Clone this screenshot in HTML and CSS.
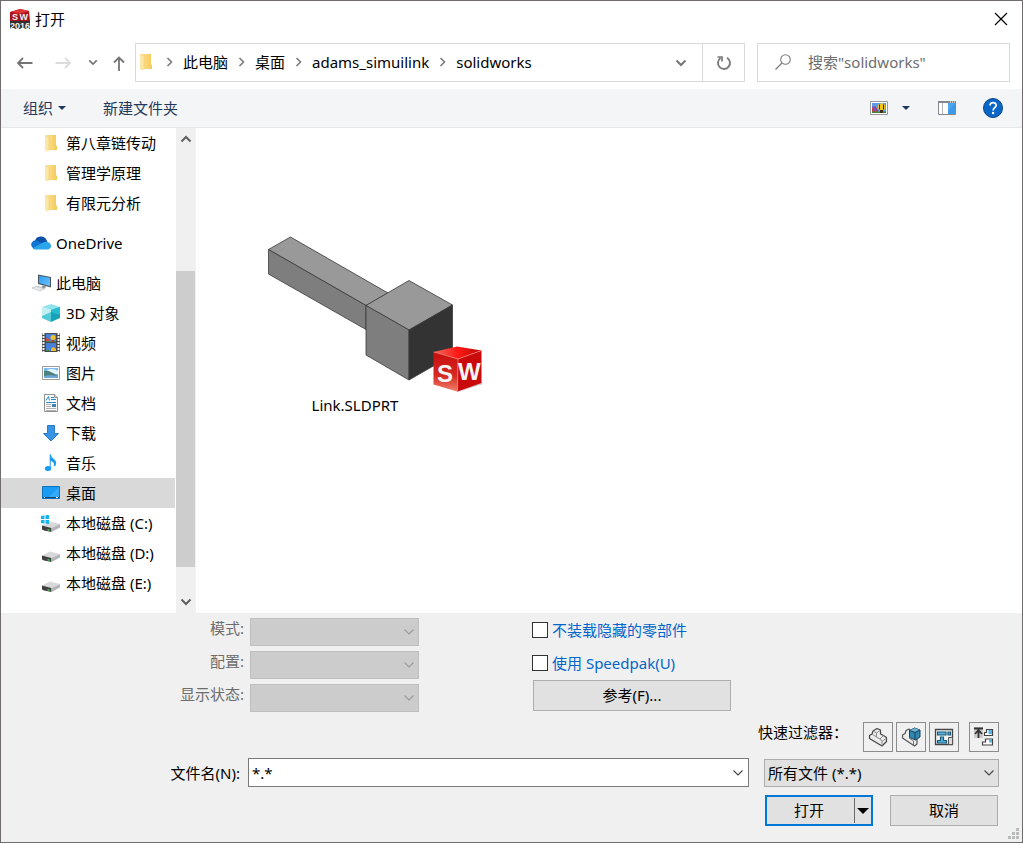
FILE: index.html
```html
<!DOCTYPE html>
<html lang="zh-CN">
<head>
  <meta charset="UTF-8">
  <meta name="viewport" content="width=device-width, initial-scale=1.0">
  <title>打开</title>
  <link rel="stylesheet" href="styles.css">
</head>
<body>
<!-- shared icons -->
<svg class="sprite" width="0" height="0">
  <defs>
    <linearGradient id="gFolder"><stop offset="0" stop-color="#ffe08a"/><stop offset="1" stop-color="#f2c95c"/></linearGradient>
    <linearGradient id="gScreen" x1="0" y1="0" x2="1" y2="1"><stop offset="0" stop-color="#2a9df4"/><stop offset="1" stop-color="#6cc4ff"/></linearGradient>
    <linearGradient id="gRed" x1="0" y1="0" x2="0" y2="1"><stop offset="0" stop-color="#c80d0d"/><stop offset=".6" stop-color="#d42a22"/><stop offset="1" stop-color="#f0806a"/></linearGradient>
    <linearGradient id="gRedTop" x1="0" y1="0" x2="1" y2="0"><stop offset="0" stop-color="#f06a62"/><stop offset=".5" stop-color="#ff1a14"/><stop offset="1" stop-color="#b80808"/></linearGradient>
  </defs>
  <symbol id="folder" viewBox="0 0 20 20">
    <path d="M6 2h9v10l1 1v4H6z" fill="url(#gFolder)"/>
    <path d="M4 2l4 2v13.500l-2 1L4 17z" fill="#fbe7a8"/>
    <path d="M4 2l4 2v13.500" fill="none" stroke="#edc768" stroke-width=".5"/>
  </symbol>
  <symbol id="right" viewBox="0 0 7 10"><path d="M1.500 1l4 4-4 4" fill="none" stroke="#7a7a7a" stroke-width="1.600"/></symbol>
  <symbol id="down" viewBox="0 0 12 8"><path d="M1.500 1.500L6 6l4.500-4.500" fill="none" stroke="currentColor" stroke-width="2"/></symbol>
  <symbol id="down-thin" viewBox="0 0 12 8"><path d="M1.500 1.500L6 6l4.500-4.500" fill="none" stroke="currentColor" stroke-width="1.100"/></symbol>
  <symbol id="caret" viewBox="0 0 8 4"><path d="M0 0h8L4 4z" fill="currentColor"/></symbol>
  <symbol id="drive" viewBox="0 0 20 20">
    <path d="M1 12.500l8-4 10 2.500-8.500 4z" fill="#d9d9dc"/>
    <path d="M1 12.500l9.500 2.500v4L3 17.500l-2-1z" fill="#3f4042"/>
    <path d="M10.500 15l8.500-4v3.500L10.500 19z" fill="#b4b5b9"/>
    <path d="M6.500 16l2 .6v1.400l-2-.6z" fill="#3fd14a"/>
  </symbol>
</svg>

<div class="dialog">
  <header class="titlebar">
    <svg class="app-icon" viewBox="0 0 20 20">
      <path d="M0 3l10-3 9 2 1 10H0z" fill="#a81218"/>
      <path d="M1 3l9-3 9 2-9 3z" fill="#de3335"/>
      <path d="M10 5v8" stroke="#6f0a0d"/>
      <text x="2" y="11" font-size="9" class="logo-text">S</text>
      <text x="9.500" y="11" font-size="9" class="logo-text">W</text>
      <path d="M0 12h20v8H0z" fill="#33302f"/>
      <text x="0" y="19.500" font-size="9" class="logo-text">2016</text>
    </svg>
    <h1>打开</h1>
    <button class="plain close" aria-label="关闭">
      <svg width="14" height="14" viewBox="0 0 14 14"><path d="M1 1l12 12M13 1L1 13" stroke="#000" stroke-width="1.200"/></svg>
    </button>
  </header>

  <nav class="navbar">
    <div class="nav-buttons">
      <button class="plain" aria-label="后退"><svg width="18" height="14" viewBox="0 0 18 14"><path d="M16.500 7H2M7 2L2 7l5 5" fill="none" stroke="#757575" stroke-width="1.800"/></svg></button>
      <button class="plain" aria-label="前进"><svg width="18" height="14" viewBox="0 0 18 14"><path d="M1.500 7H16M11 2l5 5-5 5" fill="none" stroke="#dcdcdc" stroke-width="1.800"/></svg></button>
      <button class="plain recent" aria-label="最近浏览的位置"><svg width="10" height="7"><use href="#down"/></svg></button>
      <button class="plain up" aria-label="上移"><svg width="14" height="18" viewBox="0 0 14 18"><path d="M7 17V3.500M2 8.500l5-5 5 5" fill="none" stroke="#757575" stroke-width="1.800"/></svg></button>
    </div>
    <div class="address">
      <div class="crumbs">
        <svg class="crumb-folder" width="20" height="20"><use href="#folder"/></svg>
        <svg width="7" height="10"><use href="#right"/></svg>
        <a href="#">此电脑</a>
        <svg width="7" height="10"><use href="#right"/></svg>
        <a href="#">桌面</a>
        <svg width="7" height="10"><use href="#right"/></svg>
        <a href="#">adams_simuilink</a>
        <svg width="7" height="10"><use href="#right"/></svg>
        <a href="#">solidworks</a>
      </div>
      <button class="plain addr-btn" aria-label="以前的位置"><svg width="12" height="8"><use href="#down"/></svg></button>
      <button class="plain addr-btn refresh" aria-label="刷新">
        <svg width="16" height="16" viewBox="0 0 16 16"><path d="M11 2.800a6 6 0 1 1-6.500.3" fill="none" stroke="#7a7a7a" stroke-width="1.900"/><path d="M1.500 2h4.500v4.500" fill="none" stroke="#7a7a7a" stroke-width="1.700"/></svg>
      </button>
    </div>
    <div class="search">
      <svg width="16" height="16" viewBox="0 0 16 16"><circle cx="10.500" cy="5.500" r="4.800" fill="none" stroke="#7d7d7d" stroke-width="1.100"/><path d="M7 9L.5 15.500" stroke="#7d7d7d" stroke-width="1.200"/></svg>
      <input type="text" aria-label="搜索" placeholder="搜索&quot;solidworks&quot;">
    </div>
  </nav>

  <div class="toolbar">
    <button class="plain organize">组织 <svg width="8" height="4"><use href="#caret"/></svg></button>
    <button class="plain">新建文件夹</button>
    <div class="tools">
      <button class="plain" aria-label="更改视图">
        <svg width="18" height="14" viewBox="0 0 18 14"><path d="M.5.5h17v13H.5z" fill="#fff" stroke="#9a9a9a"/><path d="M2 2h14v10H2z" fill="#5b9bf0"/><path d="M2 7l3-2 3 4v3H2z" fill="#c43c4c"/><path d="M2 5l3 1 2 3-3 1z" fill="#7357ba"/><path d="M2 10.500h14V12H2z" fill="#3d8b35"/><circle cx="11.500" cy="6" r="3.700" fill="#f2c61d"/><path d="M9.500 3.500v5M13.500 3.500v5" stroke="#322b12"/><path d="M10 9h3v3h-3z" fill="#452b16"/></svg>
      </button>
      <button class="plain" aria-label="更多选项"><svg width="8" height="4"><use href="#caret"/></svg></button>
      <button class="plain pane" aria-label="显示预览窗格">
        <svg width="18" height="14" viewBox="0 0 18 14"><path d="M.5.5h17v13H.5z" fill="#fff" stroke="#828790"/><path d="M0 0h18v2H0z" fill="#828790"/><path d="M12 1h1M14 1h1M16 1h1" stroke="#fff"/><path d="M4.500 2v11" stroke="#b3b6ba"/><path d="M10 2h7v11h-7z" fill="#3e9ae8"/><path d="M10 2h7l-7 8z" fill="#50a6ee"/></svg>
      </button>
      <button class="plain" aria-label="获取帮助">
        <svg width="20" height="20" viewBox="0 0 20 20"><circle cx="10" cy="10" r="9.500" fill="#0a67c8" stroke="#0b4384"/><path d="M7 7.500c0-4 6.200-3.800 6.200-.3 0 2.500-3.100 2.500-3.100 5.200" fill="none" stroke="#fff" stroke-width="1.700"/><circle cx="10.100" cy="15" r="1.200" fill="#fff"/></svg>
      </button>
    </div>
  </div>

  <main class="browser">
    <aside class="sidebar">
      <ul class="tree">
        <li class="sub"><svg><use href="#folder"/></svg>第八章链传动</li>
        <li class="sub"><svg><use href="#folder"/></svg>管理学原理</li>
        <li class="sub"><svg><use href="#folder"/></svg>有限元分析</li>
        <li class="root">
          <svg viewBox="0 0 20 20"><path d="M4 8a6 5.500 0 0 1 11.500-1l1.500 3-7 4-7-3z" fill="#0a4fa8"/><path d="M1 14a4.300 4.300 0 0 1 5-6.500l8 4.500-3 4H3z" fill="#1275d1"/><path d="M2 15l11-6c3-1 7 .5 7 4 0 2-1.500 3.500-4 3.500H4.500c-1 0-2-.5-2.500-1.500z" fill="#2aa5ea"/></svg>OneDrive</li>
        <li class="root">
          <svg viewBox="0 0 20 20"><path d="M7 1.500l13 2.500v10.500L7 11z" fill="#4b5560"/><path d="M8 2.800l11 2V13L8 10z" fill="url(#gScreen)"/><path d="M12 12.500l3 1-1 2-4-1z" fill="#8a9299"/><path d="M1 15l5-2 8 2.500-5 2.500z" fill="#d7dadd" stroke="#a7adb3" stroke-width=".5"/><path d="M4 14.500l7 2M3 15.300l6 1.800" stroke="#fff" stroke-width=".5"/></svg>此电脑</li>
        <li class="sub">
          <svg viewBox="0 0 20 20"><path d="M1 4l9-3 9 3-9 3z" fill="#8fe3ec"/><path d="M1 4l9 3v12l-9-4z" fill="#c1eff3"/><path d="M1 13l9-4v10l-9-4z" fill="#55cbd8"/><path d="M19 4l-9 3v12l9-4z" fill="#17a2b8"/><path d="M10 7l9-3v8l-9-3z" fill="#27bccd"/></svg>3D 对象</li>
        <li class="sub">
          <svg viewBox="0 0 20 20"><path d="M1 0h18v19H1z" fill="#4a4a4a"/><path d="M2.500 0v19M17.500 0v19" stroke="#f2f2f2" stroke-width="2" stroke-dasharray="2 1"/><path d="M5 1h10v8H5zM5 10h10v8H5z" fill="#477fdc"/><path d="M5 5l3 1 2 3H5z" fill="#d5464d"/><circle cx="12" cy="4.500" r="2.500" fill="#f3c12a"/><path d="M11 7h2v2h-2z" fill="#c72f2b"/><path d="M5 8h5v1H5zM13 8h2v1h-2z" fill="#44903d"/><path d="M10 16l2-2 3 2v2h-5z" fill="#f0bd29"/><path d="M5 17h4v1H5z" fill="#44903d"/></svg>视频</li>
        <li class="sub">
          <svg viewBox="0 0 20 20"><path d="M1.500 3.500h17v13h-17z" fill="#fff" stroke="#9b9b9b"/><path d="M3 5h14v10H3z" fill="#7ebcf2"/><path d="M6 7c4-2 8-1 11 1v3H9z" fill="#e5f3fd"/><path d="M3 8c4-1 8 1 14 5H3z" fill="#4d8079"/><path d="M3 13c5-1.500 9-.5 14 0v2H3z" fill="#6fa6d8"/></svg>图片</li>
        <li class="sub">
          <svg viewBox="0 0 20 20"><path d="M3.500 1.500h10l3 3v14h-13z" fill="#fcfcfc" stroke="#8e8e8e"/><path d="M13.500 1.500v3h3" fill="#ddd" stroke="#8e8e8e"/><path d="M5 7.500l2.500-4 1 4M10 4.500h3M10 6.500h5M5 9.500h10" fill="none" stroke="#258ad6"/><path d="M5 11.500h5M5 13.500h5M5 15.500h10M5 17.500h10" stroke="#b2b2b2"/><path d="M11 11h4v3h-4z" fill="#3f82b8"/></svg>文档</li>
        <li class="sub">
          <svg viewBox="0 0 20 20"><path d="M6.500 2.500h7v8h4L10 18l-7.500-7.500h4z" fill="#3895e6" stroke="#2a7ac6"/></svg>下载</li>
        <li class="sub">
          <svg viewBox="0 0 20 20"><ellipse cx="7" cy="15.500" rx="3.200" ry="2.500" fill="#159bf2"/><path d="M9.200 15.500V1.500c.5 4 5.500 4.500 5.500 8.500 0 1.500-.6 2.500-1.400 3.200.8-3-.8-5-4-5.700" fill="#159bf2" stroke="#159bf2"/></svg>音乐</li>
        <li class="sub selected">
          <svg viewBox="0 0 20 20"><path d="M1.500 3.500h17v12h-17z" fill="#1b9cf4" stroke="#1074bd"/><path d="M18 4L8 14h10z" fill="#36a9f8"/><path d="M2 14.500h16" stroke="#0b4778"/><path d="M3 14.500h1M15 14.500h2" stroke="#fff"/></svg>桌面</li>
        <li class="sub">
          <svg viewBox="0 0 20 20"><use href="#drive"/><path d="M0 3l3.500-.5V6H0zM4.500 2.300L8 2v4H4.500zM0 7h3.500v3.500L0 10zM4.500 7H8v4l-3.500-.5z" fill="#10b4f1"/></svg>本地磁盘 (C:)</li>
        <li class="sub"><svg><use href="#drive"/></svg>本地磁盘 (D:)</li>
        <li class="sub"><svg><use href="#drive"/></svg>本地磁盘 (E:)</li>
      </ul>
      <div class="scrollbar">
        <button class="plain" aria-label="向上滚动"><svg class="flip" width="12" height="8"><use href="#down"/></svg></button>
        <div class="track"><div class="thumb"></div></div>
        <button class="plain" aria-label="向下滚动"><svg width="12" height="8"><use href="#down"/></svg></button>
      </div>
    </aside>

    <section class="files">
      <figure class="file">
        <svg width="256" height="256" viewBox="227 137 256 256">
          <g stroke="#3a3a3a" stroke-width=".8" stroke-linejoin="round">
            <path d="M268.500 249.500l22-12.500L388 293l-22 12.500z" fill="#999"/>
            <path d="M268.500 249.500l97.500 56v24l-97.500-55.500z" fill="#7e7e7e"/>
            <path d="M366 305.500l43-25 43.500 24.500-43.500 25z" fill="#999"/>
            <path d="M366 305.500l43 24.500v50l-43-25z" fill="#7e7e7e"/>
            <path d="M409 330l43.500-25v50L409 380z" fill="#333"/>
          </g>
          <path d="M440 386l18 6 25-8-2-3z" fill="#000" opacity=".2"/>
          <path d="M433.500 352l23.500-5.500 24.500 4L458 359z" fill="url(#gRedTop)"/>
          <path d="M433.500 352l24.500 7-.5 32.500-24-7z" fill="url(#gRed)"/>
          <path d="M458 359l23.500-8.500V383l-24 8.500z" fill="#c9090c"/>
          <path d="M433.500 352l24.500 7 23.500-8.500M458 359l-.5 32" fill="none" stroke="#ff8a7c" stroke-width=".7"/>
          <text x="437" y="382" font-size="24" class="logo-text">S</text>
          <text x="458" y="380" font-size="24" class="logo-text">W</text>
        </svg>
        <figcaption>Link.SLDPRT</figcaption>
      </figure>
    </section>
  </main>

  <footer class="panel">
    <div class="options">
      <div class="modes">
        <label class="dim" for="mode">模式:</label>
        <div class="select"><select id="mode" disabled></select><svg><use href="#down-thin"/></svg></div>
        <label class="dim" for="config">配置:</label>
        <div class="select"><select id="config" disabled></select><svg><use href="#down-thin"/></svg></div>
        <label class="dim" for="display">显示状态:</label>
        <div class="select"><select id="display" disabled></select><svg><use href="#down-thin"/></svg></div>
      </div>
      <div class="checks">
        <label><input type="checkbox">不装载隐藏的零部件</label>
        <label><input type="checkbox">使用 Speedpak(U)</label>
        <button class="btn reference">参考(F)...</button>
      </div>
    </div>

    <div class="filters">
      <span class="filters-label">快速过滤器：</span>
      <button class="icon-btn" aria-label="过滤零件">
        <svg viewBox="0 0 20 20"><path d="M1.500 11.500V8.500L4 7l1-3 4-2.500 3.500 1.500v4l3 1.500 3 2v4L14 19z" fill="#ececec" stroke="#444" stroke-width="1.200" stroke-linejoin="round"/><path d="M5 4l3.500 2L12.500 3M8.500 6v4l3.500 2 3.500-3.500M12 12l2 2.500V19M14 14.500L18.500 11M4 7l4.500 3" fill="none" stroke="#888"/></svg>
      </button>
      <button class="icon-btn" aria-label="过滤装配体">
        <svg viewBox="0 0 20 20"><path d="M1.500 11V8L4 6.500l1-3L8 2l8 9v6l-2.500 2z" fill="#ececec" stroke="#555" stroke-width="1.200" stroke-linejoin="round"/><path d="M8.500 3.500l5-2.500 5.500 2v7l-4.500 3-6-2.500z" fill="#3187ad" stroke="#173f58" stroke-linejoin="round"/><path d="M8.500 3.500l5.500 2 5-2.500-5.500-2z" fill="#69b0d0"/><path d="M8.500 3.500l5.500 2 5-2.500M14 5.500v7" fill="none" stroke="#173f58"/><path d="M8 11l4.500 3v4" fill="none" stroke="#777"/></svg>
      </button>
      <button class="icon-btn" aria-label="过滤工程图">
        <svg viewBox="0 0 20 20"><path d="M1.500 2.500h17v15h-17z" fill="#f5f5f5" stroke="#444" stroke-width="1.300"/><path d="M3.500 5h8.500v3H3.500zM14 5h2.500v3H14zM6.500 10h3v3.500h3V16h-9v-2.500h3z" fill="#54b4e0" stroke="#1d5878" stroke-width="1.200"/><path d="M14.500 10.500h4v7h-4z" fill="#ddd" stroke="#555"/></svg>
      </button>
      <button class="icon-btn top-level" aria-label="过滤顶级装配体">
        <svg viewBox="0 0 20 20"><path d="M0 0h9v11H0z" fill="#ccc"/><path d="M0 1.500h9M4.500 11V3M1 7l3.500-4L8 7" fill="none" stroke="#333" stroke-width="1.800"/><path d="M10.500 8V5.500h2v-3h6v6h-8zM8.500 18v-3h3v-3h7v6z" fill="#fff" stroke="#444" stroke-width="1.200"/><path d="M14.500 3H18v4h-3.500zM15 12.500h3v3h-3z" fill="#54b4e4"/></svg>
      </button>
    </div>

    <div class="name-row">
      <label for="filename">文件名(N):</label>
      <div class="combo">
        <input id="filename" type="text" value="*.*">
        <button class="plain" aria-label="以前的文件名"><svg width="12" height="8"><use href="#down-thin"/></svg></button>
      </div>
      <div class="select type"><select aria-label="文件类型"><option>所有文件 (*.*)</option></select><svg><use href="#down-thin"/></svg></div>
    </div>

    <div class="actions">
      <div class="split">
        <button class="plain open">打开</button>
        <button class="plain more" aria-label="打开选项"><svg width="12" height="6"><use href="#caret"/></svg></button>
      </div>
      <button class="btn">取消</button>
    </div>

    <svg class="grip" width="11" height="11" viewBox="0 0 11 11"><path d="M8 0h3v3H8zM4 4h3v3H4zM8 4h3v3H8zM0 8h3v3H0zM4 8h3v3H4zM8 8h3v3H8z" fill="#bcbcbc"/></svg>
  </footer>
</div>
</body>
</html>
```
FILE: styles.css
```css
* {
  box-sizing: border-box;
}

body {
  margin: 0;
  background: #fff;
  color: #000;
  font-family: "Noto Sans", "Noto Sans CJK SC", sans-serif;
  font-size: 15px;
  line-height: 20px;
}

button, input, select {
  font: inherit;
  color: inherit;
  margin: 0;
}

svg {
  flex: none;
  display: block;
}

.sprite {
  position: absolute;
}

.logo-text {
  font-family: "Liberation Sans", sans-serif;
  font-weight: bold;
  fill: #f4f4f4;
}

.plain {
  display: flex;
  align-items: center;
  justify-content: center;
  padding: 0;
  border: none;
  background: none;
}

.dialog {
  display: flex;
  flex-direction: column;
  min-height: 100vh;
  border: 1px solid #6f6b6e;
}

/* title */
.titlebar {
  display: flex;
  align-items: center;
  gap: 5px;
  height: 36px;
  padding: 0 14px 0 9px;
}

.titlebar h1 {
  margin: 0;
  font-size: 15px;
  font-weight: normal;
}

.app-icon {
  width: 20px;
  height: 20px;
}

.close {
  margin-left: auto;
}

/* navigation */
.navbar {
  display: flex;
  gap: 12px;
  padding: 6px 12px 7px 15px;
}

.nav-buttons {
  display: flex;
  align-items: center;
  gap: 20px;
  width: 107px;
  color: #757575;
}

.nav-buttons .recent {
  margin-left: -4px;
}

.nav-buttons .up {
  margin-left: -6px;
}

.address {
  display: flex;
  flex: 1;
  height: 39px;
  border: 1px solid #d9d9d9;
}

.crumbs {
  display: flex;
  flex: 1;
  align-items: center;
  gap: 10px;
  padding-bottom: 2px;
}

.crumbs a {
  color: #000;
  text-decoration: none;
}

.addr-btn {
  width: 42px;
  color: #757575;
}

.refresh {
  border-left: 1px solid #d9d9d9;
}

.search {
  display: flex;
  align-items: center;
  gap: 17px;
  width: 253px;
  padding: 0 0 2px 17px;
  border: 1px solid #d9d9d9;
}

.search input {
  flex: 1;
  min-width: 0;
  padding: 0;
  border: none;
  outline: none;
}

.search input::placeholder {
  color: #6d6d6d;
  opacity: 1;
}

.toolbar {
  display: flex;
  align-items: center;
  gap: 37px;
  height: 39px;
  padding: 0 19px 0 22px;
  border-bottom: 1px solid #e5e7ea;
  background: #f4f5f7;
  color: #1e395b;
}

.organize {
  gap: 5px;
}

.tools {
  display: flex;
  align-items: center;
  gap: 14px;
  margin-left: auto;
}

.pane {
  margin: 0 13px 0 14px;
}

/* folder tree and files */
.browser {
  display: flex;
  flex: 1;
}

.sidebar {
  display: flex;
  width: 198px;
  padding-right: 2px;
  border-right: 1px solid #fafafa;
}

.tree {
  flex: 1;
  margin: 0;
  padding: 0 0 15px;
  list-style: none;
}

.tree li {
  display: flex;
  align-items: center;
  gap: 5px;
  height: 30px;
  padding-left: 40px;
  white-space: nowrap;
}

.tree .root {
  margin-top: 10px;
  padding-left: 30px;
}

.tree .selected {
  margin-right: 1px;
  background: #d9d9d9;
}

.tree svg {
  width: 20px;
  height: 20px;
}

.scrollbar {
  display: flex;
  flex-direction: column;
  width: 20px;
  background: #f0f0f0;
  color: #606060;
}

.scrollbar button {
  height: 22px;
}

.flip {
  transform: rotate(180deg);
}

.track {
  display: flex;
  flex: 1;
  flex-direction: column;
  justify-content: flex-end;
  padding: 0 1px 24px 0;
}

.thumb {
  height: 71%;
  background: #cdcdcd;
}

.files {
  flex: 1;
  padding: 9px 28px;
}

.file {
  width: 256px;
  margin: 0;
  text-align: center;
}

.file figcaption {
  padding-top: 2px;
}

/* bottom panel */
.panel {
  position: relative;
  padding: 5px 23px 16px 0;
  background: #f0f0f0;
}

.options {
  display: flex;
  gap: 113px;
}

.modes {
  display: grid;
  grid-template-columns: 243px 169px;
  gap: 5px 6px;
  text-align: right;
}

.dim {
  color: #6d6d6d;
}

.select {
  position: relative;
}

.select select {
  display: block;
  width: 100%;
  height: 28px;
  padding: 0 3px;
  appearance: none;
  border: 1px solid #adadad;
  border-radius: 0;
  background: #e1e1e1;
}

.select select:disabled {
  border-color: #bfbfbf;
  background: #ccc;
  opacity: 1;
}

.select svg {
  position: absolute;
  top: 10px;
  right: 4px;
  width: 12px;
  height: 8px;
  color: #444;
  pointer-events: none;
}

.select select:disabled + svg {
  color: #9c9c9c;
}

.checks {
  display: flex;
  flex-direction: column;
  gap: 9px;
  color: #0066cc;
}

.checks label {
  display: flex;
  align-items: center;
  gap: 4px;
  height: 24px;
}

.checks input {
  width: 16px;
  height: 16px;
  appearance: none;
  border: 1px solid #333;
  background: #fff;
}

.btn {
  width: 108px;
  height: 31px;
  padding: 0 0 1px;
  border: 1px solid #adadad;
  background: #e1e1e1;
  color: #000;
}

.btn.reference {
  width: 198px;
  margin: -4px 0 0 1px;
}

.filters {
  display: flex;
  justify-content: flex-end;
  gap: 3px;
  padding-top: 10px;
}

.filters-label {
  margin-right: 12px;
}

.icon-btn {
  display: flex;
  align-items: center;
  justify-content: center;
  width: 30px;
  height: 30px;
  padding: 0;
  border: 1px solid #8c8c8c;
  background: #f0f0f0;
}

.icon-btn svg {
  width: 20px;
  height: 20px;
}

.top-level {
  margin-left: 7px;
}

.name-row {
  display: grid;
  grid-template-columns: 239px 1fr 235px;
  align-items: center;
  padding-top: 6px;
  text-align: right;
}

.combo {
  display: flex;
  height: 29px;
  margin: 0 15px 0 8px;
  border: 1px solid #7a7a7a;
  background: #fff;
}

.combo input {
  flex: 1;
  min-width: 0;
  padding: 0 3px;
  border: none;
  outline: none;
  background: none;
}

.combo button {
  width: 20px;
  color: #444;
}

.actions {
  display: flex;
  justify-content: flex-end;
  gap: 17px;
  padding: 8px 1px 0 0;
}

.split {
  display: flex;
  width: 108px;
  height: 31px;
  border: 2px solid #0078d7;
  background: #e1e1e1;
}

.open {
  flex: 1;
  padding: 0 3px 1px 0;
}

.more {
  width: 17px;
  margin: 1px 0;
  border-left: 1px solid #6b6b6b;
}

.grip {
  position: absolute;
  right: 3px;
  bottom: 3px;
}
```
